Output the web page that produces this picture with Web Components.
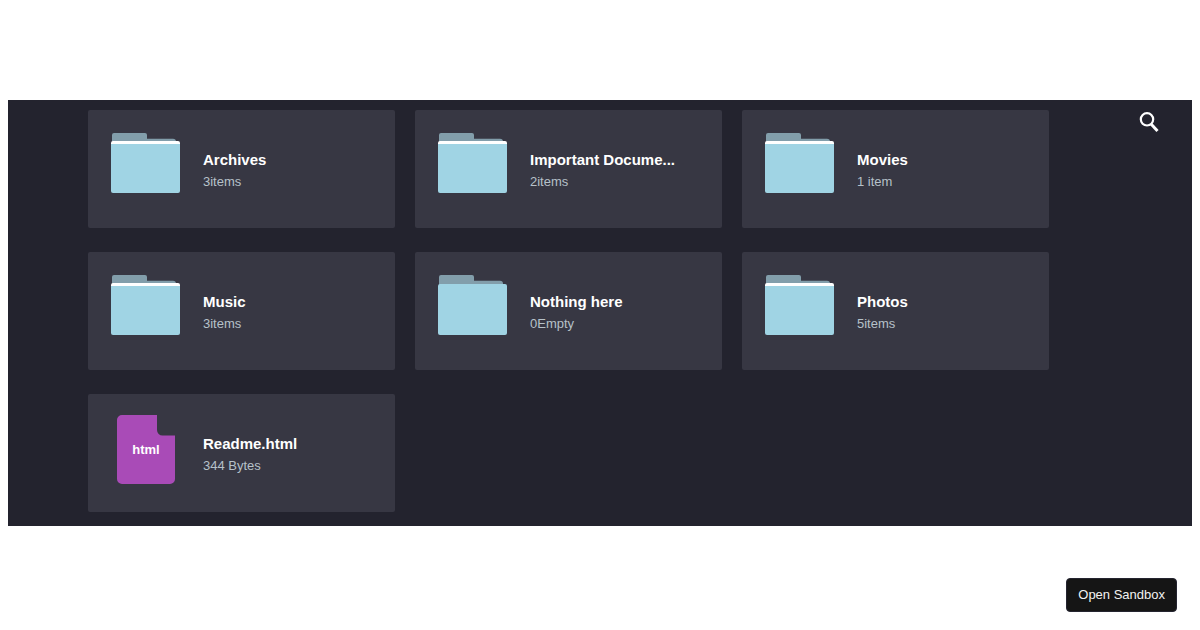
<!DOCTYPE html>
<html lang="en">
<head>
<meta charset="utf-8">
<meta name="viewport" content="width=device-width, initial-scale=1">
<title>File browser</title>
<style>
    body {
        margin: 100px 8px 0;
        background: #fff;
        font: 13px/22px "Liberation Sans", Arial, sans-serif;
    }
</style>
</head>
<body>
<file-manager>
    <file-item href="#Archives" name="Archives" details="3items" type="folder" full></file-item>
    <file-item href="#Important" name="Important Docume..." details="2items" type="folder" full></file-item>
    <file-item href="#Movies" name="Movies" details="1 item" type="folder" full></file-item>
    <file-item href="#Music" name="Music" details="3items" type="folder" full></file-item>
    <file-item href="#Nothing" name="Nothing here" details="0Empty" type="folder"></file-item>
    <file-item href="#Photos" name="Photos" details="5items" type="folder" full></file-item>
    <file-item href="#Readme" name="Readme.html" details="344 Bytes" type="html"></file-item>
</file-manager>
<sandbox-button>Open Sandbox</sandbox-button>

<script>
    // dark panel: grid of items on the left, search on the right
    customElements.define(
        "file-manager",
        class extends HTMLElement {
            connectedCallback() {
                this.attachShadow({mode: "open"}).innerHTML = `
                    <style>
                        :host {
                            display: flex;
                            align-items: flex-start;
                            gap: 88px;
                            padding: 10px 32px 14px 80px;
                            background: #23232e;
                        }
                        main {
                            flex: 1;
                            display: grid;
                            grid-template-columns: repeat(auto-fill, minmax(300px, 1fr));
                            gap: 24px 20px;
                        }
                        button {
                            flex: none;
                            padding: 0;
                            border: 0;
                            background: none;
                            cursor: pointer;
                        }
                        svg { display: block; }
                    </style>
                    <main><slot></slot></main>
                    <button type="button" aria-label="Search">
                        <svg width="23" height="24" viewBox="0 0 23 24" fill="none" stroke="#fff">
                            <circle cx="10" cy="9.300" r="6.200" stroke-width="2.200"/>
                            <path d="M14.300 14.300L20.500 21" stroke-width="3"/>
                        </svg>
                    </button>`;
            }
        }
    );

    // one folder or file card
    customElements.define(
        "file-item",
        class extends HTMLElement {
            connectedCallback() {
                const type = this.getAttribute("type");
                this.attachShadow({mode: "open"}).innerHTML = `
                    <style>
                        :host { display: block; min-width: 0; }
                        a {
                            display: flex;
                            gap: 22px;
                            padding: 21px 22px 27px 23px;
                            border-radius: 2px;
                            background: #373743;
                            color: #b6c1c9;
                            text-decoration: none;
                        }
                        svg { flex: none; }
                        text { font-size: 13px; font-weight: bold; }
                        div { min-width: 0; padding-top: 18px; }
                        span { display: block; white-space: nowrap; }
                        .name { color: #fff; font-size: 15px; font-weight: bold; }
                    </style>
                    <a href="${this.getAttribute("href")}">
                        <svg width="70" height="70" viewBox="0 0 70 70">${type == "folder" ? this.folder() : this.file(type)}</svg>
                        <div>
                            <span class="name">${this.getAttribute("name")}</span>
                            <span>${this.getAttribute("details")}</span>
                        </div>
                    </a>`;
            }

            folder() {
                // a full folder shows a strip of paper above the front
                return `
                    <path fill="#829eab" d="M1 14V4a2 2 0 0 1 2-2H34a2 2 0 0 1 2 2V7.700H62a3 3 0 0 1 3 3V14z"/>
                    ${this.hasAttribute("full") ? '<rect y="10" width="69" height="10" rx="2" fill="#fff"/>' : ""}
                    <path fill="#a0d4e4" d="M0 ${this.hasAttribute("full") ? "13H69" : "13a2 2 0 0 1 2-2H67a2 2 0 0 1 2 2"}V60a2 2 0 0 1-2 2H2a2 2 0 0 1-2-2z"/>`;
            }

            file(type) {
                return `
                    <path fill="#a94bb7" d="M11 0H46V15a5.500 5.500 0 0 0 5.500 5.500H64V64a5 5 0 0 1-5 5H11a5 5 0 0 1-5-5V5a5 5 0 0 1 5-5z"/>
                    <text x="35" y="39" fill="#fff" text-anchor="middle">${type}</text>`;
            }
        }
    );

    customElements.define(
        "sandbox-button",
        class extends HTMLElement {
            connectedCallback() {
                this.attachShadow({mode: "open"}).innerHTML = `
                    <style>
                        :host { display: flex; justify-content: flex-end; padding: 52px 15px 0 0; }
                        button {
                            padding: 8px 11px;
                            border: 1px solid #242430;
                            border-radius: 4px;
                            background: #151515;
                            color: #f2f2f2;
                            font: inherit;
                            line-height: 16px;
                            cursor: pointer;
                        }
                    </style>
                    <button type="button"><slot></slot></button>`;
            }
        }
    );
</script>
</body>
</html>
